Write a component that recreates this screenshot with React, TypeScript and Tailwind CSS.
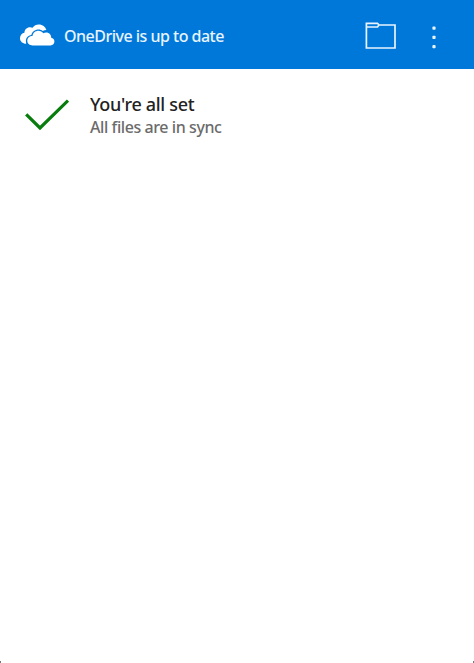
const syncStatus = {
    header: 'OneDrive is up to date',
    title: "You're all set",
    detail: 'All files are in sync',
};

function CloudLogo() {
    return (
        <svg className="h-[22px] w-[35px] shrink-0" viewBox="0 0 35 22" aria-hidden="true">
            <path
                fill="#fff"
                d="M6.2 19.8C2.6 19.6 0 17.4 0 14.2c0-2.9 2-5 4.4-5.4C4.6 5.4 7 3.2 10 3.2c1 0 1.8.2 2.5.6C13.9 1.5 16.2.4 18.8.4c3.8 0 6.6 2.3 7.6 5.6-1.4 0-2.5.3-3.6.9-1.2-1-2.7-1.5-4.3-1.5-3.5 0-6.4 2.3-7.2 5.6-3.2.5-5.4 2.8-5.4 5.8 0 1.1.1 2.1.3 3z"
            />
            <path
                fill="#fff"
                d="M12.7 21.5c-3.2 0-5.4-2-5.4-4.7 0-2.8 2.2-4.8 5.2-4.8.2-3.1 2.8-5.3 6-5.3 2.1 0 3.7.9 4.8 2.5.9-.6 1.9-.8 2.9-.8 2.9 0 5 2.2 5 4.9v.5c2 .2 3.2 1.7 3.2 3.8 0 2.3-1.5 3.9-3.9 3.9z"
            />
        </svg>
    );
}

function FolderIcon() {
    return (
        <svg className="h-[27px] w-[31px]" viewBox="0 0 31 27" fill="none" stroke="#e9f4ff" strokeWidth="1.7" aria-hidden="true">
            <path d="M1.4 1.3H12.5L14 3H30V26H1.4z" />
            <path d="M1.4 5H12.5L14 3" />
        </svg>
    );
}

function MoreIcon() {
    return (
        <svg className="h-[23px] w-1" viewBox="0 0 4 23" fill="#e9f4ff" aria-hidden="true">
            <rect x=".4" y=".6" width="3.2" height="3.2" rx=".8" />
            <rect x=".4" y="9.8" width="3.2" height="3.2" rx=".8" />
            <rect x=".4" y="19.1" width="3.2" height="3.2" rx=".8" />
        </svg>
    );
}

function CheckIcon() {
    return (
        <svg className="h-8 w-11 shrink-0" viewBox="0 0 44 32" fill="none" stroke="#087c0c" strokeWidth="3.2" aria-hidden="true">
            <path d="M1.2 15.3 15 29 43 1.6" />
        </svg>
    );
}

export default function App() {
    return (
        <div className="relative flex h-screen w-full flex-col overflow-hidden bg-white font-['Noto_Sans','Open_Sans',sans-serif]">
            <header className="flex h-[69px] shrink-0 items-center bg-[#0078d9] pr-[38px] pl-5 text-[#e9f4ff]">
                <CloudLogo />
                <h1 className="ml-[9px] pt-0.5 text-base font-medium tracking-[-0.51px] whitespace-nowrap">{syncStatus.header}</h1>
                <div className="ml-auto flex items-center gap-[36px]">
                    <button type="button" aria-label="Open folder" className="mt-px">
                        <FolderIcon />
                    </button>
                    <button type="button" aria-label="More" className="mt-[5px]">
                        <MoreIcon />
                    </button>
                </div>
            </header>

            {/* Sync status */}
            <main className="flex items-start px-[25px] pt-[23px]">
                <div className="pt-[7px]">
                    <CheckIcon />
                </div>
                <div className="ml-[21px] whitespace-nowrap">
                    <h2 className="text-lg leading-[24px] font-medium tracking-[-0.3px] text-[#222]">{syncStatus.title}</h2>
                    <p className="text-base leading-[23px] font-medium tracking-[-0.42px] text-[#6b6b6b]">{syncStatus.detail}</p>
                </div>
            </main>

            {/* Window border corners */}
            <span className="absolute bottom-0 left-0 h-0.5 w-px bg-[#777]" />
            <span className="absolute right-0 bottom-0 h-0.5 w-px bg-[#777]" />
        </div>
    );
}
